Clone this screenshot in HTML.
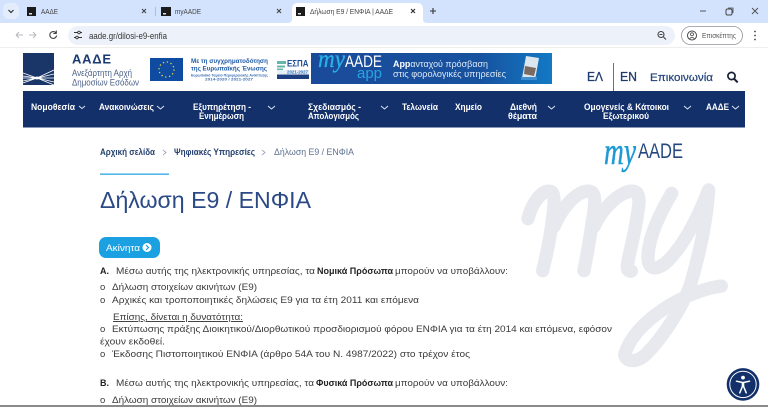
<!DOCTYPE html>
<html lang="el"><head><meta charset="utf-8"><title>Δήλωση Ε9 / ΕΝΦΙΑ | ΑΑΔΕ</title>
<style>
html,body{margin:0;padding:0;background:#fff;width:768px;height:407px;overflow:hidden}
svg{display:block;position:absolute;left:0;top:0}
text{font-family:"Liberation Sans","Noto Sans CJK JP",sans-serif;white-space:pre}
.n{font-size:9px;font-weight:700;fill:#fff}
.c{font-size:9.5px;fill:#3a3a3a}
.b{font-weight:700;fill:#222}
.t{font-size:7.5px;fill:#444}
.chev{fill:none;stroke:#dfe6f2;stroke-width:1}
.ic{fill:none;stroke:#444;stroke-width:1.1}
</style></head><body>
<svg width="768" height="407" viewBox="0 0 768 407" xmlns="http://www.w3.org/2000/svg">
<!-- browser chrome -->
<rect width="768" height="48" fill="#d3e3fd"/>
<rect x="0" y="23" width="768" height="24" fill="#fff"/>
<rect x="0" y="47" width="768" height="1" fill="#eeeeee"/>
<rect x="3" y="3" width="16" height="16" rx="6" fill="#e4edfc"/>
<path d="M8.5 10l2.5 2.5 2.5-2.5" fill="none" stroke="#333" stroke-width="1.2"/>
<rect x="27" y="7" width="9" height="9" fill="#1c1c1c"/><rect x="29" y="13" width="3" height="1.5" fill="#ddd"/>
<text x="41" y="14" class="t" textLength="17" lengthAdjust="spacingAndGlyphs">ΑΑΔΕ</text>
<path d="M142 9l4 4M146 9l-4 4" stroke="#444" stroke-width="1.1"/>
<rect x="155" y="7" width="1" height="9" fill="#a9bfe0"/>
<rect x="161" y="7" width="10" height="9" fill="#1c1c1c"/><rect x="163" y="13" width="3" height="1.5" fill="#ddd"/>
<text x="175" y="14" class="t" textLength="26" lengthAdjust="spacingAndGlyphs">myAADE</text>
<path d="M277 9l4 4M281 9l-4 4" stroke="#444" stroke-width="1.1"/>
<path d="M288 23q4 0 4-4V9q0-6 6-6h119q6 0 6 6v10q0 4 4 4z" fill="#fff"/>
<rect x="296" y="7" width="9" height="9" fill="#1c1c1c"/><rect x="298" y="13" width="3" height="1.5" fill="#ddd"/>
<text x="310" y="14" class="t" textLength="83" lengthAdjust="spacingAndGlyphs">Δήλωση Ε9 / ΕΝΦΙΑ | ΑΑΔΕ</text>
<path d="M411 9l4 4M415 9l-4 4" stroke="#333" stroke-width="1.2"/>
<path d="M430 11h6M433 8v6" stroke="#333" stroke-width="1.1"/>
<path d="M700 11h6" stroke="#555" stroke-width="1"/>
<rect x="726" y="9" width="6" height="6" rx="1.5" fill="none" stroke="#444"/><path d="M728 8h5v5" fill="none" stroke="#444" stroke-width=".8"/>
<path d="M752 8l6 6M758 8l-6 6" stroke="#555" stroke-width="1"/>
<path d="M16 35h7M16 35l3-3M16 35l3 3" fill="none" stroke="#b5b8bd" stroke-width="1"/>
<path d="M29 35h7M36 35l-3-3M36 35l-3 3" fill="none" stroke="#b5b8bd" stroke-width="1"/>
<path d="M56 33a3.4 3.4 0 1 0 .6 2.5M56.3 30.5v3h-3" fill="none" stroke="#444" stroke-width="1.1"/>
<rect x="68" y="26" width="607" height="19" rx="9.5" fill="#edf2fa"/>
<path d="M74 32.5h4M80 32.5h2M74 37.5h2M78 37.5h4" stroke="#333" stroke-width="1"/><circle cx="79" cy="32.5" r="1.3" fill="#edf2fa" stroke="#333" stroke-width=".8"/><circle cx="77" cy="37.5" r="1.3" fill="#edf2fa" stroke="#333" stroke-width=".8"/>
<text x="89" y="39" font-size="9" fill="#333" textLength="78" lengthAdjust="spacingAndGlyphs">aade.gr/dilosi-e9-enfia</text>
<circle cx="661" cy="34.5" r="3" class="ic"/><path d="M663.5 37l2.5 2.5M659.5 34.5h3" class="ic"/>
<rect x="681.5" y="26.5" width="61" height="18" rx="9" fill="#fff" stroke="#8f949b" stroke-width=".8"/>
<circle cx="692" cy="35.5" r="4.5" fill="none" stroke="#444"/><circle cx="692" cy="34.3" r="1.5" fill="none" stroke="#444" stroke-width=".8"/><path d="M689.5 39c1-2 4-2 5 0" fill="none" stroke="#444" stroke-width=".8"/>
<text x="702" y="38" font-size="7.5" fill="#555" textLength="34" lengthAdjust="spacingAndGlyphs">Επισκέπτης</text>
<circle cx="755" cy="31.5" r=".9" fill="#444"/><circle cx="755" cy="35.5" r=".9" fill="#444"/><circle cx="755" cy="39.5" r=".9" fill="#444"/>

<!-- watermark my -->
<g transform="translate(500 170) scale(.3333)" fill="none" stroke="#e7e9ef" stroke-width="40" stroke-linecap="round" stroke-linejoin="round">
<path d="M84 146C98 90 130 60 150 64c16 3 14 40 8 80-6 50-18 110-30 158"/>
<path d="M162 170C192 100 240 58 270 64c22 5 14 50 6 95-6 50-16 100-24 143"/>
<path d="M282 170C312 105 370 58 402 64c24 6 14 50 6 95-8 50-22 95-26 130 0 14 8 16 12 14"/>
<path d="M515 70C480 130 445 200 444 262c0 40 30 40 60 10 50-50 90-130 122-212-6 100-30 200-55 285-15 45-70 145-135 210-30 25-60 20-62-2 30-100 180-190 290-205"/>
</g>

<!-- header -->
<rect x="23" y="53" width="31" height="32" fill="#1a3668"/>
<path d="M23 73L37 78 23 83M54 70L37 78 54 85M23 76l14 2-14 3M54 74l-17 4 17 4M37 78h17M23 78h14" fill="none" stroke="#fff" stroke-width=".8"/>
<path d="M31 78l6-1.5 6 1.5-6 1.5z" fill="#fff"/>
<text x="72" y="63.500" font-size="13" font-weight="700" fill="#1b3a72" textLength="39" lengthAdjust="spacing">ΑΑΔΕ</text>
<text x="72" y="76" font-size="8.8" fill="#4a5f86" textLength="60" lengthAdjust="spacingAndGlyphs">Ανεξάρτητη Αρχή</text>
<text x="72" y="85.5" font-size="8.8" fill="#4a5f86" textLength="67" lengthAdjust="spacingAndGlyphs">Δημοσίων Εσόδων</text>
<rect x="150" y="58" width="33" height="23" fill="#0f4ba0"/>
<circle cx="166.5" cy="69.5" r="7.5" fill="none" stroke="#e8d43a" stroke-width="1.3" stroke-dasharray="1.3 2.63"/>
<text x="191" y="63" font-size="6.5" font-weight="700" fill="#1e5aa8" textLength="77" lengthAdjust="spacingAndGlyphs">Με τη συγχρηματοδότηση</text>
<text x="191" y="70.5" font-size="6.5" font-weight="700" fill="#1e5aa8" textLength="76" lengthAdjust="spacingAndGlyphs">της Ευρωπαϊκής Ένωσης</text>
<text x="191" y="76.5" font-size="3.5" font-weight="700" fill="#3a6bb0" textLength="77" lengthAdjust="spacingAndGlyphs">Ευρωπαϊκό Ταμείο Περιφερειακής Ανάπτυξης</text>
<text x="205" y="80.5" font-size="3.5" font-weight="700" fill="#3a6bb0" textLength="48" lengthAdjust="spacingAndGlyphs">2014-2020 / 2021-2027</text>
<path d="M277 61h9v3h-9zM277 65.500h8v2h-8zM277 68.500h6v1.500h-6z" fill="#67b7a8"/>
<text x="287" y="66.500" font-size="9.5" font-weight="700" fill="#1b4d9c" textLength="21.500" lengthAdjust="spacingAndGlyphs">ΕΣΠΑ</text>
<rect x="277" y="70" width="32" height="4" fill="#e7f0f8"/>
<text x="287" y="73.500" font-size="4.500" font-weight="700" fill="#2f6fb8" textLength="21" lengthAdjust="spacingAndGlyphs">2021-2027</text>
<rect x="277" y="74.500" width="32" height="4.500" fill="#1b3f80"/>
<defs><linearGradient id="bg" x1="0" x2="1" y1="0" y2="0"><stop offset="0" stop-color="#1a4a9a"/><stop offset=".7" stop-color="#17529f"/><stop offset="1" stop-color="#1379c4"/></linearGradient></defs>
<rect x="311" y="53" width="241" height="31" fill="url(#bg)"/>
<text x="318" y="67" font-size="25" font-style="italic" fill="#27b2e6" stroke="#27b2e6" stroke-width=".3" textLength="27" lengthAdjust="spacingAndGlyphs" style="font-family:'Liberation Serif',serif">my</text>
<text x="345" y="67" font-size="16.500" fill="#fff" textLength="37" lengthAdjust="spacingAndGlyphs">AADE</text>
<text x="357" y="78" font-size="15" fill="#27a5e2" textLength="25" lengthAdjust="spacingAndGlyphs">app</text>
<text x="393" y="67" font-size="8.8" fill="#dde8f5" textLength="95" lengthAdjust="spacingAndGlyphs"><tspan font-weight="700" fill="#fff">App</tspan>ανταχού πρόσβαση</text>
<text x="393" y="77" font-size="8.8" fill="#dde8f5" textLength="113" lengthAdjust="spacingAndGlyphs">στις φορολογικές υπηρεσίες</text>
<path d="M526 56l13 2-4 22-13-2z" fill="#dbe6ef"/><path d="M525 66l11 2-2 8-10-2z" fill="#7a6a62"/><rect x="521" y="77" width="16" height="3" fill="#3e8fd0"/>
<text x="587" y="81" font-size="13" fill="#1f3a6e" stroke="#1f3a6e" stroke-width=".3" textLength="16" lengthAdjust="spacingAndGlyphs">ΕΛ</text>
<rect x="613" y="63" width="1" height="28" fill="#5f7292"/>
<text x="620" y="81" font-size="13" fill="#1f3a6e" stroke="#1f3a6e" stroke-width=".3" textLength="17" lengthAdjust="spacingAndGlyphs">EN</text>
<text x="650" y="81" font-size="11" fill="#24457e" stroke="#24457e" stroke-width=".2" textLength="63" lengthAdjust="spacingAndGlyphs">Επικοινωνία</text>
<circle cx="731.5" cy="76" r="3.6" fill="none" stroke="#151f33" stroke-width="1.7"/><path d="M734.3 79l3.4 3.4" stroke="#151f33" stroke-width="2"/>

<!-- nav -->
<rect x="23" y="91" width="722" height="36.5" fill="#13306b"/>
<text x="31" y="110" class="n" textLength="44" lengthAdjust="spacingAndGlyphs">Νομοθεσία</text><path class="chev" d="M79 106l3 2.5 3-2.5"/>
<text x="99" y="110" class="n" textLength="55" lengthAdjust="spacingAndGlyphs">Ανακοινώσεις</text><path class="chev" d="M157 106l3.5 3 3.5-3"/>
<text x="193" y="110" class="n" textLength="58" lengthAdjust="spacingAndGlyphs">Εξυπηρέτηση -</text><text x="199" y="119" class="n" textLength="45" lengthAdjust="spacingAndGlyphs">Ενημέρωση</text><path class="chev" d="M268 106l3.5 3 3.5-3"/>
<text x="308" y="110" class="n" textLength="53" lengthAdjust="spacingAndGlyphs">Σχεδιασμός -</text><text x="308" y="119" class="n" textLength="51" lengthAdjust="spacingAndGlyphs">Απολογισμός</text><path class="chev" d="M381 106l3.5 3 3.5-3"/>
<text x="402" y="110" class="n" textLength="36" lengthAdjust="spacingAndGlyphs">Τελωνεία</text>
<text x="455" y="110" class="n" textLength="27" lengthAdjust="spacingAndGlyphs">Χημείο</text>
<text x="510" y="110" class="n" textLength="27" lengthAdjust="spacingAndGlyphs">Διεθνή</text><text x="508" y="119" class="n" textLength="29" lengthAdjust="spacingAndGlyphs">θέματα</text><path class="chev" d="M548 106l3.5 3 3.5-3"/>
<text x="584" y="110" class="n" textLength="85" lengthAdjust="spacingAndGlyphs">Ομογενείς &amp; Κάτοικοι</text><text x="603" y="119" class="n" textLength="46" lengthAdjust="spacingAndGlyphs">Εξωτερικού</text><path class="chev" d="M684 106l3.5 3 3.5-3"/>
<text x="706" y="110" class="n" textLength="23" lengthAdjust="spacingAndGlyphs">ΑΑΔΕ</text><path class="chev" d="M732 106l3.5 3 3.5-3"/>

<!-- myAADE logo -->
<text x="604" y="164" font-size="38" font-style="italic" fill="#1e9ad6" stroke="#1e9ad6" stroke-width=".5" textLength="32" lengthAdjust="spacingAndGlyphs" style="font-family:'Liberation Serif',serif">my</text>
<text x="638" y="158" font-size="21" fill="#24477f" textLength="45" lengthAdjust="spacingAndGlyphs">AADE</text>

<!-- breadcrumb -->
<text x="100" y="155" font-size="9" font-weight="700" fill="#25416f" textLength="55" lengthAdjust="spacingAndGlyphs">Αρχική σελίδα</text>
<path d="M163 150l3 2.5-3 2.5" fill="none" stroke="#8a97ad" stroke-width=".8"/>
<text x="174" y="155" font-size="9" font-weight="700" fill="#25416f" textLength="81" lengthAdjust="spacingAndGlyphs">Ψηφιακές Υπηρεσίες</text>
<path d="M262 150l3 2.5-3 2.5" fill="none" stroke="#8a97ad" stroke-width=".8"/>
<text x="274" y="155" font-size="9" fill="#5d7191" textLength="80" lengthAdjust="spacingAndGlyphs">Δήλωση Ε9 / ΕΝΦΙΑ</text>
<rect x="100" y="173.5" width="69" height="1.3" fill="#2ba6e3"/>

<text x="100" y="208" font-size="23.5" fill="#2b4a85" textLength="211" lengthAdjust="spacingAndGlyphs">Δήλωση Ε9 / ΕΝΦΙΑ</text>

<rect x="99" y="237" width="61" height="21" rx="7" fill="#1ba0e2"/>
<text x="106" y="251" font-size="9.5" fill="#fff" textLength="34" lengthAdjust="spacingAndGlyphs">Ακίνητα</text>
<circle cx="147" cy="247.500" r="4.500" fill="#fff"/><path d="M146 245l2.500 2.500-2.500 2.500" fill="none" stroke="#1ba0e2" stroke-width="1.2"/>

<!-- content -->
<text x="100" y="274" class="c b" textLength="9" lengthAdjust="spacingAndGlyphs">A.</text>
<text x="116" y="274" class="c" textLength="199" lengthAdjust="spacingAndGlyphs">Μέσω αυτής της ηλεκτρονικής υπηρεσίας, τα</text>
<text x="317" y="274" class="c b" textLength="76" lengthAdjust="spacingAndGlyphs">Νομικά Πρόσωπα</text>
<text x="395" y="274" class="c" textLength="113" lengthAdjust="spacingAndGlyphs">μπορούν να υποβάλλουν:</text>
<text x="100" y="290" class="c">o</text>
<text x="112" y="290" class="c" textLength="145" lengthAdjust="spacingAndGlyphs">Δήλωση στοιχείων ακινήτων (Ε9)</text>
<text x="100" y="303" class="c">o</text>
<text x="112" y="303" class="c" textLength="307" lengthAdjust="spacingAndGlyphs">Αρχικές και τροποποιητικές δηλώσεις Ε9 για τα έτη 2011 και επόμενα</text>
<text x="113" y="320" class="c" text-decoration="underline" textLength="130" lengthAdjust="spacingAndGlyphs">Επίσης, δίνεται η δυνατότητα:</text>
<text x="100" y="332" class="c">o</text>
<text x="112" y="332" class="c" textLength="500" lengthAdjust="spacingAndGlyphs">Εκτύπωσης πράξης Διοικητικού/Διορθωτικού προσδιορισμού φόρου ΕΝΦΙΑ για τα έτη 2014 και επόμενα, εφόσον</text>
<text x="100" y="344.5" class="c" textLength="65" lengthAdjust="spacingAndGlyphs">έχουν εκδοθεί.</text>
<text x="100" y="357" class="c">o</text>
<text x="112" y="357" class="c" textLength="358" lengthAdjust="spacingAndGlyphs">Έκδοσης Πιστοποιητικού ΕΝΦΙΑ (άρθρο 54Α του Ν. 4987/2022) στο τρέχον έτος</text>
<text x="100" y="386" class="c b" textLength="9" lengthAdjust="spacingAndGlyphs">B.</text>
<text x="116" y="386" class="c" textLength="198" lengthAdjust="spacingAndGlyphs">Μέσω αυτής της ηλεκτρονικής υπηρεσίας, τα</text>
<text x="316" y="386" class="c b" textLength="77" lengthAdjust="spacingAndGlyphs">Φυσικά Πρόσωπα</text>
<text x="395" y="386" class="c" textLength="113" lengthAdjust="spacingAndGlyphs">μπορούν να υποβάλλουν:</text>
<text x="100" y="403" class="c">o</text>
<text x="112" y="403" class="c" textLength="145" lengthAdjust="spacingAndGlyphs">Δήλωση στοιχείων ακινήτων (Ε9)</text>

<!-- accessibility -->
<circle cx="743" cy="384.4" r="16.3" fill="#13306b"/>
<circle cx="743" cy="384.4" r="13.2" fill="none" stroke="#fff" stroke-width="1"/>
<circle cx="743" cy="377.6" r="1.9" fill="#fff"/>
<path d="M736.5 381.2L743 382.6 749.5 381.2" fill="none" stroke="#fff" stroke-width="1.5" stroke-linecap="round" stroke-linejoin="round"/>
<path d="M743 382.6v4" fill="none" stroke="#fff" stroke-width="2.6"/>
<path d="M742.4 386.5L739.8 392.800M743.600 386.500L746.200 392.800" fill="none" stroke="#fff" stroke-width="1.5" stroke-linecap="round"/>

<rect x="0" y="405" width="768" height="2" fill="#8a8a8a"/>
</svg>
</body></html>
